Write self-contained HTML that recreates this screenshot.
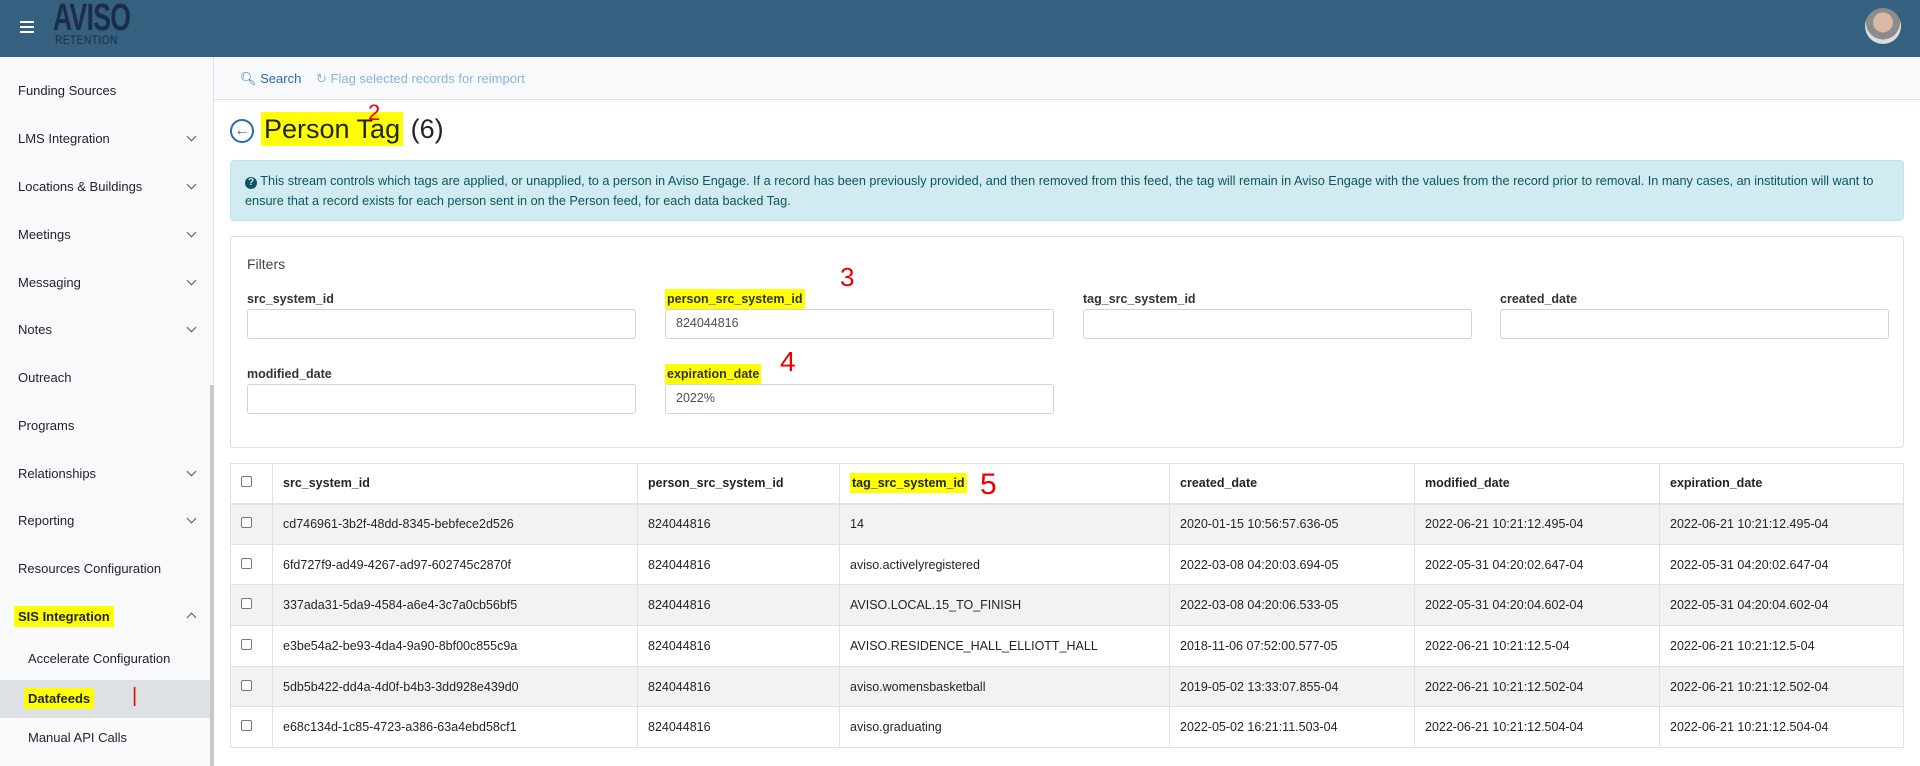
<!DOCTYPE html>
<html><head><meta charset="utf-8"><style>
*{box-sizing:border-box;margin:0;padding:0}
body{width:1920px;height:766px;overflow:hidden;font-family:"Liberation Sans",sans-serif;font-size:13px;color:#212529;background:#fff;position:relative}
.hdr{position:absolute;left:0;top:0;width:1920px;height:57px;background:#36607f}
.burger{position:absolute;left:20px;top:21px;width:14px}
.burger i{display:block;height:2px;background:#fff;margin-bottom:3px}
.logo{position:absolute;left:53px;top:2px;color:#1b2d48;font-weight:bold;font-size:38px;letter-spacing:-1px;transform:scaleX(.7);transform-origin:left;line-height:32px}
.logo2{position:absolute;left:55px;top:33px;color:#1b2d48;font-size:12px;letter-spacing:.5px;transform:scaleX(.85);transform-origin:left}
.av{position:absolute;left:1865px;top:8px;width:36px;height:36px;border-radius:50%;background:radial-gradient(circle at 50% 40%,#d9b8a4 0 35%,#8c8c8c 36% 60%,#ddd 61%)}
.side{position:absolute;left:0;top:57px;width:214px;height:709px;background:#f8f9fa;border-right:1px solid #dee2e6}
.sb{position:absolute;left:210px;top:385px;width:4px;height:381px;background:#c8c8c8}
.si{position:absolute;left:18px;font-size:13px;color:#212529}
.chev{position:absolute;left:188px;width:7px;height:7px;border-right:1.5px solid #555;border-bottom:1.5px solid #555;transform:rotate(45deg)}
.tb{position:absolute;left:214px;top:57px;width:1706px;height:43px;background:#f8f9fa;border-bottom:1px solid #dee2e6}
.hl{background:#ffff00}
.red{color:#e00;position:absolute;font-family:"Liberation Sans",sans-serif}
.alert{position:absolute;left:230px;top:160px;width:1674px;height:61px;background:#d1ecf1;border:1px solid #bee5eb;border-radius:4px;color:#0c5460;padding:10px 14px;line-height:20px;font-size:12.7px}
.card{position:absolute;left:230px;top:236px;width:1674px;height:212px;border:1px solid #dfdfdf;border-radius:4px}
.lbl{position:absolute;font-weight:bold;font-size:12.5px;color:#333}
.inp{position:absolute;width:389px;height:30px;border:1px solid #ced4da;border-radius:3px;padding:6px 10px;color:#495057;font-size:12.5px}
table{position:absolute;left:230px;top:463px;width:1674px;border-collapse:collapse}
td,th{border:1px solid #dee2e6;text-align:left;padding:0 10px;height:40.7px;font-size:12.5px}
th{height:40px;border-bottom:2px solid #dee2e6}
tr.s td{background:#f2f2f2}
.cb{display:inline-block;width:11px;height:11px;border:1px solid #777;border-radius:2px;background:#fff}
</style></head><body>
<div class="hdr"><div class="burger"><i></i><i></i><i></i></div><div class="logo">AVISO</div><div class="logo2">RETENTION</div><div class="av"></div></div>
<div class="side">
<div class="si" style="top:26px">Funding Sources</div>
<div class="si" style="top:74px">LMS Integration</div><div class="chev" style="top:76px"></div>
<div class="si" style="top:122px">Locations &amp; Buildings</div><div class="chev" style="top:124px"></div>
<div class="si" style="top:170px">Meetings</div><div class="chev" style="top:172px"></div>
<div class="si" style="top:218px">Messaging</div><div class="chev" style="top:220px"></div>
<div class="si" style="top:265px">Notes</div><div class="chev" style="top:267px"></div>
<div class="si" style="top:313px">Outreach</div>
<div class="si" style="top:361px">Programs</div>
<div class="si" style="top:409px">Relationships</div><div class="chev" style="top:411px"></div>
<div class="si" style="top:456px">Reporting</div><div class="chev" style="top:458px"></div>
<div class="si" style="top:504px">Resources Configuration</div>
<div class="si" style="top:552px;left:14px;font-weight:bold"><span class="hl" style="padding:3px 4px">SIS Integration</span></div><div class="chev" style="top:557px;transform:rotate(225deg)"></div>
<div class="si" style="top:594px;left:28px">Accelerate Configuration</div>
<div style="position:absolute;left:0;top:623px;width:210px;height:38px;background:#dde0e4"></div>
<div class="si" style="top:634px;left:24px;font-weight:bold"><span class="hl" style="padding:3px 4px">Datafeeds</span></div>
<div class="red" style="left:132px;top:628px;font-size:20px">|</div>
<div class="si" style="top:673px;left:28px">Manual API Calls</div>
</div>
<div class="sb"></div>
<div class="tb">
<div style="position:absolute;left:26px;top:14px;color:#2a6bb8;font-size:13px">&#x1F50D;&#xFE0E; Search</div>
<div style="position:absolute;left:102px;top:14px;color:#8ab4df;font-size:13px">&#8635; Flag selected records for reimport</div>
</div>
<div style="position:absolute;left:230px;top:119px;width:24px;height:24px;border:2px solid #2a6bb8;border-radius:50%;color:#2a6bb8;font-size:16px;line-height:19px;text-align:center">&#8592;</div>
<div style="position:absolute;left:261px;top:114px;font-size:27px;color:#212529"><span class="hl" style="padding:2px 3px">Person Tag</span> (6)</div>
<div class="red" style="left:368px;top:100px;font-size:22px">2</div>
<div class="alert"><b style="display:inline-block;width:12px;height:12px;border-radius:50%;background:#0c5460;color:#d1ecf1;font-size:10px;line-height:12px;text-align:center">?</b> This stream controls which tags are applied, or unapplied, to a person in Aviso Engage. If a record has been previously provided, and then removed from this feed, the tag will remain in Aviso Engage with the values from the record prior to removal. In many cases, an institution will want to ensure that a record exists for each person sent in on the Person feed, for each data backed Tag.</div>
<div class="card">
<div style="position:absolute;left:16px;top:19px;font-size:14px;color:#444">Filters</div>
<div class="lbl" style="left:16px;top:55px">src_system_id</div>
<div class="lbl" style="left:434px;top:55px"><span class="hl" style="padding:3px 2px">person_src_system_id</span></div>
<div class="lbl" style="left:852px;top:55px">tag_src_system_id</div>
<div class="lbl" style="left:1269px;top:55px">created_date</div>
<div class="inp" style="left:16px;top:72px"></div>
<div class="inp" style="left:434px;top:72px">824044816</div>
<div class="inp" style="left:852px;top:72px"></div>
<div class="inp" style="left:1269px;top:72px"></div>
<div class="lbl" style="left:16px;top:130px">modified_date</div>
<div class="lbl" style="left:434px;top:130px"><span class="hl" style="padding:3px 2px">expiration_date</span></div>
<div class="inp" style="left:16px;top:147px"></div>
<div class="inp" style="left:434px;top:147px">2022%</div>
</div>
<div class="red" style="left:840px;top:262px;font-size:26px">3</div>
<div class="red" style="left:780px;top:346px;font-size:28px">4</div>
<table>
<tr><th style="width:42px"><span class="cb"></span></th><th style="width:365px">src_system_id</th><th style="width:202px">person_src_system_id</th><th style="width:330px"><span class="hl" style="padding:3px 2px">tag_src_system_id</span></th><th style="width:245px">created_date</th><th style="width:245px">modified_date</th><th>expiration_date</th></tr>
<tr class="s"><td><span class="cb"></span></td><td>cd746961-3b2f-48dd-8345-bebfece2d526</td><td>824044816</td><td>14</td><td>2020-01-15 10:56:57.636-05</td><td>2022-06-21 10:21:12.495-04</td><td>2022-06-21 10:21:12.495-04</td></tr>
<tr><td><span class="cb"></span></td><td>6fd727f9-ad49-4267-ad97-602745c2870f</td><td>824044816</td><td>aviso.activelyregistered</td><td>2022-03-08 04:20:03.694-05</td><td>2022-05-31 04:20:02.647-04</td><td>2022-05-31 04:20:02.647-04</td></tr>
<tr class="s"><td><span class="cb"></span></td><td>337ada31-5da9-4584-a6e4-3c7a0cb56bf5</td><td>824044816</td><td>AVISO.LOCAL.15_TO_FINISH</td><td>2022-03-08 04:20:06.533-05</td><td>2022-05-31 04:20:04.602-04</td><td>2022-05-31 04:20:04.602-04</td></tr>
<tr><td><span class="cb"></span></td><td>e3be54a2-be93-4da4-9a90-8bf00c855c9a</td><td>824044816</td><td>AVISO.RESIDENCE_HALL_ELLIOTT_HALL</td><td>2018-11-06 07:52:00.577-05</td><td>2022-06-21 10:21:12.5-04</td><td>2022-06-21 10:21:12.5-04</td></tr>
<tr class="s"><td><span class="cb"></span></td><td>5db5b422-dd4a-4d0f-b4b3-3dd928e439d0</td><td>824044816</td><td>aviso.womensbasketball</td><td>2019-05-02 13:33:07.855-04</td><td>2022-06-21 10:21:12.502-04</td><td>2022-06-21 10:21:12.502-04</td></tr>
<tr><td><span class="cb"></span></td><td>e68c134d-1c85-4723-a386-63a4ebd58cf1</td><td>824044816</td><td>aviso.graduating</td><td>2022-05-02 16:21:11.503-04</td><td>2022-06-21 10:21:12.504-04</td><td>2022-06-21 10:21:12.504-04</td></tr>
</table>
<div class="red" style="left:980px;top:468px;font-size:30px">5</div>
</body></html>
